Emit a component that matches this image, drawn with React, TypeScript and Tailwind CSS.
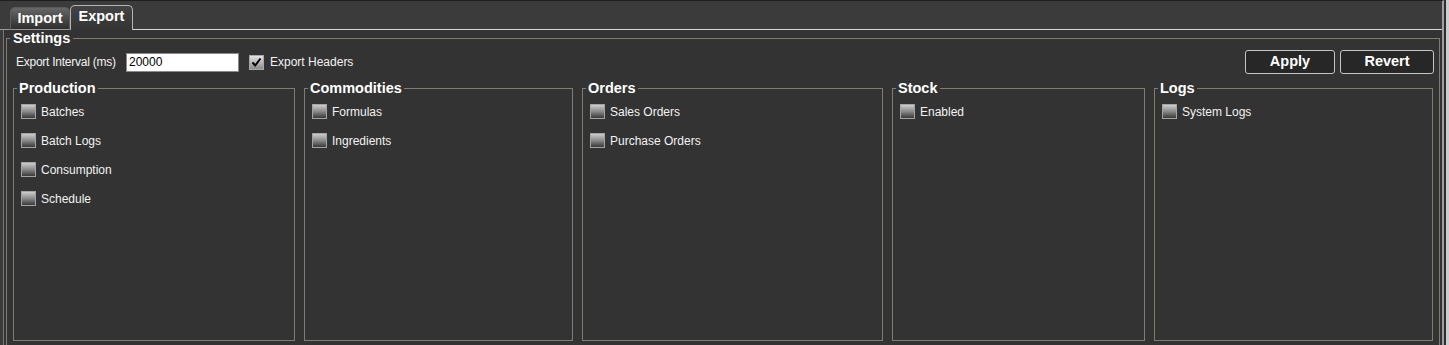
import React from 'react';

interface Group {
  title: string;
  width: string;
  items: string[];
}

const groups: Group[] = [
  { title: 'Production', width: 'w-[282px]', items: ['Batches', 'Batch Logs', 'Consumption', 'Schedule'] },
  { title: 'Commodities', width: 'w-[269px]', items: ['Formulas', 'Ingredients'] },
  { title: 'Orders', width: 'w-[301px]', items: ['Sales Orders', 'Purchase Orders'] },
  { title: 'Stock', width: 'w-[253px]', items: ['Enabled'] },
  { title: 'Logs', width: 'w-[279px]', items: ['System Logs'] },
];

const font = "font-['Liberation_Sans',Arial,sans-serif]";

const CheckBox: React.FC<{ checked?: boolean }> = ({ checked }) => {
  if (checked) {
    return (
      <span className="flex h-[15px] w-[15px] shrink-0 items-center justify-center border border-[#a8a8a8] bg-linear-to-b from-[#e4e4e4] to-[#8c8c8c]">
        <svg width="11" height="11" viewBox="0 0 11 11">
          <path d="M1.5 5.5 L4.2 8.5 L9.5 1.5" fill="none" stroke="#000" strokeWidth="2" />
        </svg>
      </span>
    );
  }
  return (
    <span className="block h-[15px] w-[15px] shrink-0 border border-[#a4a4a4] bg-linear-to-b from-[#cccccc] via-[#8a8a8a] to-[#3a3a3a]" />
  );
};

const GroupBox: React.FC<{ group: Group }> = ({ group }) => (
  <fieldset className={`${group.width} h-[261px] shrink-0 border border-[#7f7d6f] pl-[3px]`}>
    <legend className="px-[2px] text-[14.5px] leading-[17px] font-bold text-white">{group.title}</legend>
    <div className="ml-[4px] flex flex-col">
      {group.items.map((item) => (
        <div key={item} className="flex h-[29px] items-center gap-[5px]">
          <CheckBox />
          <span className="text-[12px] text-[#f2f2f2]">{item}</span>
        </div>
      ))}
    </div>
  </fieldset>
);

const App: React.FC = () => {
  return (
    <div className={`${font} flex h-[345px] w-[1449px] overflow-hidden bg-[#3b3b3b]`}>
      <div className="flex w-[1444px] flex-col border-r-2 border-[#a0a0a0] border-t border-t-[#1e1e1e]">
        {/* tab strip */}
        <div className="flex h-[29px] shrink-0 items-end">
          <div className="h-full w-[10px] border-b border-[#9a9a9a]" />
          <div className="flex h-[23px] w-[60px] items-start justify-center rounded-t-[5px] border border-[#5a5a5a] border-b-[#9a9a9a] bg-linear-to-b from-[#676767] to-[#2f2f2f] pt-[2px] text-[14.5px] leading-[17px] font-bold text-white">
            Import
          </div>
          <div className="flex h-[25px] w-[63px] items-start justify-center rounded-t-[5px] border border-b-0 border-[#b4b4b4] bg-linear-to-b from-[#444444] to-[#333333] pt-[2px] text-[14.5px] leading-[17px] font-bold text-white">
            Export
          </div>
          <div className="h-full flex-1 border-b border-[#d8d8d8]" />
        </div>

        {/* panel */}
        <div className="ml-[3px] min-h-0 flex-1 overflow-hidden border-l border-[#777777] bg-[#333333] pr-[2px] pl-[2px]">
          <fieldset className="h-[330px] border border-[#7f7d6f] pl-[3px]">
            <legend className="px-[3px] text-[14.5px] leading-[17px] font-bold text-white">Settings</legend>
            <div className="ml-[3px] mr-[5px]">
              <div className="mt-[3px] flex h-[24px] items-center pl-[3px]">
                <span className="w-[110px] text-[12px] tracking-[-0.25px] text-[#f2f2f2]">Export Interval (ms)</span>
                <input
                  readOnly
                  value="20000"
                  className={`${font} h-[19px] w-[113px] border border-[#8a8a8a] bg-white px-[2px] text-[12px] text-black outline-none`}
                />
                <span className="ml-[10px]">
                  <CheckBox checked />
                </span>
                <span className="ml-[6px] text-[12px] text-[#f2f2f2]">Export Headers</span>
                <div className="ml-auto flex gap-[5px]">
                  <button className="h-[24px] w-[90px] rounded-[3px] border border-[#c4c4c4] bg-[#272727] text-[14.5px] font-bold text-white">
                    Apply
                  </button>
                  <button className="h-[24px] w-[94px] rounded-[3px] border border-[#c4c4c4] bg-[#272727] text-[14.5px] font-bold text-white">
                    Revert
                  </button>
                </div>
              </div>
              <div className="mt-[6px] flex gap-[9px]">
                {groups.map((g) => (
                  <GroupBox key={g.title} group={g} />
                ))}
              </div>
            </div>
          </fieldset>
        </div>
      </div>
      <div className="w-[2px] bg-[#2e2e2e]" />
      <div className="flex-1 bg-[#c8d0d0]" />
    </div>
  );
};

export default App;
